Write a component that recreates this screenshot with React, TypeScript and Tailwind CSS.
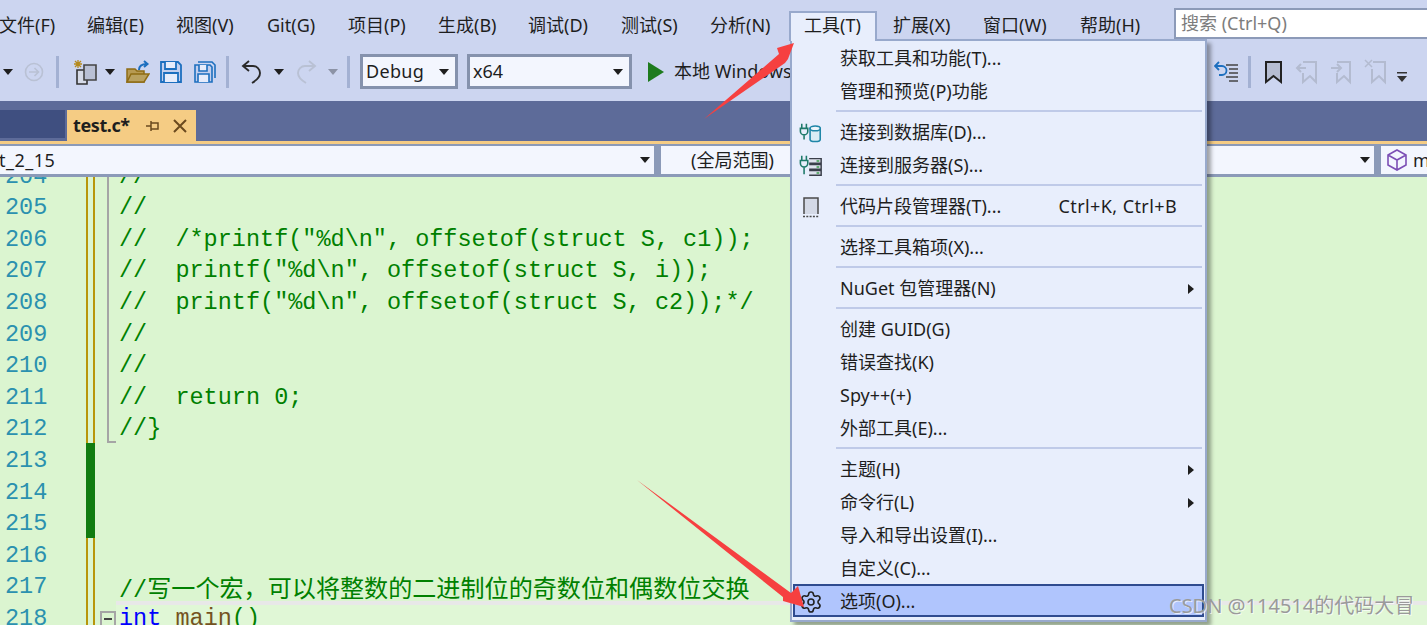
import React from 'react';
import { Settings } from 'lucide-react';

const menus = [
  { label: '文件(F)', cls: 'w-[87px] -ml-px' },
  { label: '编辑(E)', cls: 'w-[89px] ml-px' },
  { label: '视图(V)', cls: 'w-[91px]' },
  { label: 'Git(G)', cls: 'w-[81px]' },
  { label: '项目(P)', cls: 'w-[90px]' },
  { label: '生成(B)', cls: 'w-[90px]' },
  { label: '调试(D)', cls: 'w-[93px]' },
  { label: '测试(S)', cls: 'w-[89px]' },
  { label: '分析(N)', cls: 'w-[79px]' },
];
const menusAfter = [
  { label: '扩展(X)', cls: 'w-[106px] pl-[16px]' },
  { label: '窗口(W)', cls: 'w-[97px]' },
  { label: '帮助(H)', cls: 'w-[94px]' },
];

type Item = { label?: string; icon?: React.ReactNode; shortcut?: string; sub?: boolean; active?: boolean; sep?: boolean };

const DbIcon = () => (
  <svg width="24" height="24" viewBox="0 0 26 24" fill="none">
    <path d="M3 2v5M8 2v5M1.5 7h8v3a4 4 0 0 1-8 0zM5.500 14v5" stroke="#1f7a6a" strokeWidth="1.700" />
    <path d="M12 7v12c0 3 11 3 11 0V7z" fill="#d9ecf5" stroke="#1f86a8" strokeWidth="1.700" />
    <ellipse cx="17.500" cy="7" rx="5.500" ry="2.500" fill="#eef6fb" stroke="#1f86a8" strokeWidth="1.700" />
  </svg>
);

const ServerIcon = () => (
  <svg width="24" height="24" viewBox="0 0 26 24" fill="none">
    <path d="M3 1v5M8 1v5M1.500 6h8v3a4 4 0 0 1-8 0zM5.500 13v8" stroke="#1f7a6a" strokeWidth="1.700" />
    <path d="M11 4h13v5H11M11 10.500h13v5H11M11 17h13v5H11" fill="#dfe3ee" stroke="#3a3f4a" strokeWidth="1.600" />
    <path d="M19 6.500h3M19 13h3M19 19.500h3" stroke="#3b9c4b" strokeWidth="1.600" />
  </svg>
);

const SnippetIcon = () => (
  <svg width="18" height="22" viewBox="0 0 18 22" fill="none">
    <path d="M2 18V2h14v16" fill="#d4d9e6" stroke="#4a4a4a" strokeWidth="1.500" />
    <path d="M1 20.500h16" stroke="#4a4a4a" strokeWidth="1.500" strokeDasharray="2 1.300" />
  </svg>
);

const toolItems: Item[] = [
  { label: '获取工具和功能(T)...' },
  { label: '管理和预览(P)功能' },
  { sep: true },
  { label: '连接到数据库(D)...', icon: <DbIcon /> },
  { label: '连接到服务器(S)...', icon: <ServerIcon /> },
  { sep: true },
  { label: '代码片段管理器(T)...', icon: <SnippetIcon />, shortcut: 'Ctrl+K, Ctrl+B' },
  { sep: true },
  { label: '选择工具箱项(X)...' },
  { sep: true },
  { label: 'NuGet 包管理器(N)', sub: true },
  { sep: true },
  { label: '创建 GUID(G)' },
  { label: '错误查找(K)' },
  { label: 'Spy++(+)' },
  { label: '外部工具(E)...' },
  { sep: true },
  { label: '主题(H)', sub: true },
  { label: '命令行(L)', sub: true },
  { label: '导入和导出设置(I)...' },
  { label: '自定义(C)...' },
  { label: '选项(O)...', icon: <Settings size={24} strokeWidth={1.600} color="#222" />, active: true },
];

const Caret = ({ color = '#1e1e1e', size = 10 }: { color?: string; size?: number }) => (
  <svg width={size} height={size * 0.6} viewBox="0 0 10 6">
    <path d="M0 0h10L5 6z" fill={color} />
  </svg>
);

const Sep = ({ className }: { className: string }) => <div className={`w-[3px] h-[32px] bg-[#a3b1d3] shrink-0 ${className}`} />;

const Slot = ({ className, children }: { className: string; children: React.ReactNode }) => (
  <div className={`flex items-center justify-center shrink-0 ${className}`}>{children}</div>
);

const Bookmark = ({ fill, stroke }: { fill: string; stroke: string }) => (
  <path d="M5 3h15v20l-7.500-6L5 23z" fill={fill} stroke={stroke} strokeWidth="2" />
);

const Combo = ({ className, text, textClass = '', caret = true }: { className: string; text?: string; textClass?: string; caret?: boolean }) => (
  <div className={`flex items-center bg-[#f3f6fe] overflow-hidden ${className}`}>
    <span className={`flex-1 whitespace-nowrap ${textClass}`}>{text}</span>
    {caret && <Caret />}
  </div>
);

const Num = ({ n }: { n: number }) => (
  <div className="w-[86px] shrink-0 pl-[5px] pt-[2px] text-[#2b91af]">{n}</div>
);

const rows: { n: number; code?: React.ReactNode; fold?: 'line' | 'end' | 'box'; changed?: boolean; current?: boolean }[] = [
  { n: 204, code: '//', fold: 'line' },
  { n: 205, code: '//', fold: 'line' },
  { n: 206, code: '//  /*printf("%d\\n", offsetof(struct S, c1));', fold: 'line' },
  { n: 207, code: '//  printf("%d\\n", offsetof(struct S, i));', fold: 'line' },
  { n: 208, code: '//  printf("%d\\n", offsetof(struct S, c2));*/', fold: 'line' },
  { n: 209, code: '//', fold: 'line' },
  { n: 210, code: '//', fold: 'line' },
  { n: 211, code: '//  return 0;', fold: 'line' },
  { n: 212, code: '//}', fold: 'end' },
  { n: 213, changed: true },
  { n: 214, changed: true },
  { n: 215, changed: true },
  { n: 216 },
  { n: 217, code: <>//<span className="text-[24.100px] [font-family:'Noto_Sans_CJK_SC',sans-serif]">写一个宏，可以将整数的二进制位的奇数位和偶数位交换</span></> },
  {
    n: 218,
    fold: 'box',
    current: true,
    code: (
      <>
        <span className="text-[#0000ff]">int</span> <span className="text-[#74531f]">main</span>()
      </>
    ),
  },
];

const App: React.FC = () => {
  return (
    <div className="relative w-[1427px] h-[625px] overflow-hidden flex flex-col bg-[#ccd5f0] text-[18px] text-[#1e1e1e] [font-family:'Noto_Sans','Noto_Sans_CJK_SC',sans-serif]">
      {/* menu bar */}
      <div className="flex h-[44px] shrink-0 items-start">
        {menus.map(m => (
          <div key={m.label} className={`h-[50px] pt-[12px] leading-[26px] whitespace-nowrap shrink-0 ${m.cls}`}>{m.label}</div>
        ))}
        <div className="relative z-30 w-[88px] h-[30px] mt-[11px] shrink-0 bg-[#e8eefc] border-2 border-b-0 border-[#98a9cc] pl-[13px] leading-[24px] whitespace-nowrap">
          工具(T)
        </div>
        {menusAfter.map(m => (
          <div key={m.label} className={`h-[50px] pt-[12px] leading-[26px] whitespace-nowrap shrink-0 ${m.cls}`}>{m.label}</div>
        ))}
        <div className="mt-[8px] flex-1 h-[31px] bg-white border-2 border-r-0 border-[#8c9ab8] pl-[5px] leading-[26px] text-[#7d7d7d] whitespace-nowrap">
          搜索 (Ctrl+Q)
        </div>
      </div>

      {/* toolbar */}
      <div className="flex h-[57px] shrink-0 items-center pb-[2px]">
        <Slot className="w-[16px]"><Caret /></Slot>
        <Slot className="w-[28px] ml-[4px]">
          <svg width="20" height="20" viewBox="0 0 20 20" fill="none" stroke="#b9c1d4" strokeWidth="1.600">
            <circle cx="10" cy="10" r="8.500" />
            <path d="M5 10h9M10.500 6l4 4-4 4" />
          </svg>
        </Slot>
        <Sep className="ml-[8px]" />
        <Slot className="w-[32px] ml-[11px]">
          <svg width="26" height="26" viewBox="0 0 26 26" fill="none">
            <path d="M5 1v8M1 5h8M2 2l6 6M8 2L2 8" stroke="#b58a1e" strokeWidth="1.300" />
            <path d="M4 11h10v14H4z" fill="#d6dbe8" stroke="#333" strokeWidth="1.600" />
            <path d="M11 6h12v15H11z" fill="#b9c0d4" stroke="#444" strokeWidth="1.600" />
          </svg>
        </Slot>
        <Slot className="w-[16px]"><Caret /></Slot>
        <Slot className="w-[28px] ml-[6px]">
          <svg width="24" height="24" viewBox="0 0 24 24" fill="none">
            <path d="M1 22V9h8l2 2h7v11z" fill="#b79a52" stroke="#8f6c14" strokeWidth="1.500" />
            <path d="M1 22l4-8h18l-5 8z" fill="#b9a15f" stroke="#8f6c14" strokeWidth="1.500" />
            <path d="M13 10c0-4 3-6 8-6M18 1l3.500 3L18 7" stroke="#1c6fbf" strokeWidth="2" />
          </svg>
        </Slot>
        <Slot className="w-[28px] ml-[5px]">
          <svg width="22" height="22" viewBox="0 0 22 22" fill="none" stroke="#1c6fbf" strokeWidth="1.800">
            <path d="M1 1h17l3 3v17H1z" fill="#c3cfee" />
            <path d="M5 1v7h11V1M4 21v-9h14v9" fill="#e6ecfb" />
          </svg>
        </Slot>
        <Slot className="w-[28px] ml-[6px]">
          <svg width="22" height="22" viewBox="0 0 22 22" fill="none" stroke="#1c6fbf" strokeWidth="1.600">
            <path d="M4 1h14l3 3v13" />
            <path d="M1 4h15l2 2v15H1z" fill="#c3cfee" />
            <path d="M5 4v6h8V4M4 21v-8h11v8" fill="#e6ecfb" />
          </svg>
        </Slot>
        <Sep className="ml-[7px]" />
        <Slot className="w-[28px] ml-[9px]">
          <svg width="22" height="24" viewBox="0 0 22 24" fill="none" stroke="#2a2a2a" strokeWidth="1.900">
            <path d="M8 1L2 6l6 5" />
            <path d="M2 6h10a7 7 0 0 1 7 7c0 4-3 7-8 10" />
          </svg>
        </Slot>
        <Slot className="w-[16px] ml-[5px]"><Caret /></Slot>
        <Slot className="w-[28px] ml-[5px]">
          <svg width="22" height="24" viewBox="0 0 22 24" fill="none" stroke="#b9c1d4" strokeWidth="1.900">
            <path d="M14 1l6 5-6 5" />
            <path d="M20 6H10a7 7 0 0 0-7 7c0 4 3 7 8 10" />
          </svg>
        </Slot>
        <Slot className="w-[16px] ml-[5px]"><Caret color="#8c93a6" /></Slot>
        <Sep className="ml-[6px]" />
        <Combo className="w-[98px] h-[35px] ml-[10px] border-[3px] border-[#8592ad] pl-[3px] pr-[6px] tracking-[0.3px]" text="Debug" />
        <Combo className="w-[165px] h-[35px] ml-[9px] border-[3px] border-[#8592ad] pl-[3px] pr-[6px]" text="x64" />
        <Slot className="w-[16px] ml-[16px]">
          <svg width="16" height="20" viewBox="0 0 16 20"><path d="M0 0l16 10L0 20z" fill="#1e7b1e" /></svg>
        </Slot>
        <span className="ml-[10px] whitespace-nowrap">本地 Windows 调试器</span>
        <div className="ml-auto flex items-center pr-[15px]">
          <Slot className="w-[26px]">
            <svg width="25" height="22" viewBox="0 0 25 22" fill="none">
              <path d="M5 1L1 5l4 4M1 5h7a4 4 0 0 1 0 9H5" stroke="#1c6fbf" strokeWidth="1.800" />
              <path d="M12 4h12M15 8h9M15 12h9M12 16h12M15 20h9" stroke="#444" strokeWidth="1.400" />
            </svg>
          </Slot>
          <Sep className="ml-[9px]" />
          <Slot className="w-[34px] ml-[5px]">
            <svg width="25" height="26" viewBox="0 0 25 26"><Bookmark fill="#b6bdd2" stroke="#222" /></svg>
          </Slot>
          <Slot className="w-[34px]">
            <svg width="25" height="26" viewBox="0 0 25 26" fill="none" stroke="#b3bbd0" strokeWidth="2">
              <path d="M8 3h13v20l-6-6-7 6v-9" />
              <path d="M11 9H2M6 5L2 9l4 4" />
            </svg>
          </Slot>
          <Slot className="w-[34px]">
            <svg width="25" height="26" viewBox="0 0 25 26" fill="none" stroke="#b3bbd0" strokeWidth="2">
              <path d="M8 3h13v20l-6-6-7 6v-9" />
              <path d="M2 9h10M8 5l4 4-4 4" />
            </svg>
          </Slot>
          <Slot className="w-[34px]">
            <svg width="25" height="26" viewBox="0 0 25 26" fill="none" stroke="#b3bbd0" strokeWidth="2">
              <path d="M10 3h12v20l-6-6-7 6V10" />
              <path d="M2 1l7 7M9 1L2 8" strokeWidth="1.500" />
            </svg>
          </Slot>
          <Slot className="w-[20px] pt-[10px]">
            <svg width="10" height="12" viewBox="0 0 10 12">
              <path d="M0 1h10v1.500H0z" fill="#333" />
              <path d="M0 5h10L5 11z" fill="#333" />
            </svg>
          </Slot>
        </div>
      </div>

      {/* tab strip */}
      <div className="flex h-[40px] shrink-0 items-end bg-[#5d6b99]">
        <div className="w-[65px] h-[28px] mb-[3px] bg-[#3f4f80]" />
        <div className="ml-[2px] w-[129px] h-[31px] bg-[#f5cc84] flex items-center pl-[6px] font-bold text-[#1e1e1e]">
          <span className="tracking-[-0.4px]">test.c*</span>
          <svg className="ml-[16px]" width="14" height="12" viewBox="0 0 14 12" fill="none" stroke="#6b4a1e" strokeWidth="1.500">
            <path d="M0 6h5M5 1v10M5 3h7v6H5" />
          </svg>
          <svg className="ml-[13px]" width="14" height="14" viewBox="0 0 14 14" fill="none" stroke="#6b4a1e" strokeWidth="2">
            <path d="M1 1l12 12M13 1L1 13" />
          </svg>
        </div>
      </div>
      <div className="h-[3px] shrink-0 bg-[#f5cc84]" />

      {/* navigation bar */}
      <div className="flex h-[33px] shrink-0 gap-[7px] bg-[#8b9ab8] py-[2px] border-b border-[#8b9ab8]">
        <Combo className="w-[654px] pr-[4px]" text="t_2_15" textClass="-ml-[1px] tracking-[0.5px]" />
        <Combo className="w-[353px] pl-[30px]" text="(全局范围)" caret={false} />
        <Combo className="w-[353px] pr-[4px]" />
        <div className="flex-1 flex items-center bg-[#f3f6fe] pl-[5px] overflow-hidden">
          <svg width="22" height="24" viewBox="0 0 22 24" fill="none" stroke="#7c4fb5" strokeWidth="1.600" className="shrink-0">
            <path d="M11 2l9 5v10l-9 5-9-5V7zM2 7l9 5 9-5M11 12v10" />
          </svg>
          <span className="ml-[5px] whitespace-nowrap">main()</span>
        </div>
      </div>

      {/* editor */}
      <div className="flex-1 overflow-hidden bg-[#dbf5d0] text-[23.500px] leading-[31.600px] [font-family:'Liberation_Mono','Noto_Sans_CJK_SC',monospace]">
        <div className="-mt-[18.400px]">
          {rows.map(r => (
            <div key={r.n} className="flex h-[31.600px]">
              <Num n={r.n} />
              <div className={`w-[9px] shrink-0 ${r.changed ? 'bg-[#107c10]' : 'border-x-2 border-[#b8960a]'}`} />
              <div className="w-[21px] shrink-0 flex items-center">
                {r.fold === 'line' && <div className="ml-[12px] h-full w-[2px] bg-[#a5a5a5]" />}
                {r.fold === 'end' && <div className="ml-[12px] h-full w-[9px] border-l-2 border-b-2 border-[#a5a5a5]" />}
                {r.fold === 'box' && (
                  <div className="ml-[5px] mt-[4px] w-[16px] h-[16px] shrink-0 border-2 border-[#a5a5a5] flex items-center justify-center">
                    <div className="w-[8px] h-[2px] bg-[#444]" />
                  </div>
                )}
              </div>
              <div className={`flex-1 pl-[3px] pt-[2px] whitespace-pre text-[#008000] ${r.current ? 'bg-[#e0f7d6] shadow-[inset_0_4px_0_#e8e8e8]' : ''}`}>{r.code}</div>
            </div>
          ))}
        </div>
      </div>

      {/* tools dropdown */}
      <div className="absolute z-20 left-[790px] top-[39px] w-[417px] h-[583px] bg-[#e8eefc] border-2 border-[#98a9cc] shadow-[4px_4px_4px_rgba(0,0,0,0.35)]">
        {toolItems.map((item, i) =>
          item.sep ? (
            <div key={i} className="h-[2px] my-[3px] ml-[44px] mr-[3px] bg-[#bfcae8]" />
          ) : (
            <div
              key={i}
              className={`mx-px h-[33px] pt-[2px] flex items-center whitespace-nowrap ${item.active ? 'bg-[#b0c5fd] shadow-[inset_0_0_0_2px_#2f4b8f]' : ''}`}
            >
              <div className="w-[47px] shrink-0">
                <div className="w-[36px] flex justify-center">{item.icon}</div>
              </div>
              <span className="flex-1">{item.label}</span>
              {item.shortcut && <span className="tracking-[0.4px]">{item.shortcut}</span>}
              <div className="w-[27px] shrink-0 flex justify-center">
                {item.sub && (
                  <svg width="6" height="10" viewBox="0 0 6 10"><path d="M0 0l6 5-6 5z" fill="#1e1e1e" /></svg>
                )}
              </div>
            </div>
          ),
        )}
      </div>

      {/* red annotation arrows */}
      <svg className="absolute z-40 left-0 top-0 pointer-events-none" width="1427" height="625" viewBox="0 0 1427 625">
        <path d="M704 119L779 54 777 48 794 43 788 59 785 63z" fill="#f64040" />
        <path d="M637 480L791 593 798 586 804 607 783 601 783 597z" fill="#f64040" />
      </svg>

      <div className="absolute z-50 left-[1169px] top-[593px] text-[20px] leading-[26px] whitespace-nowrap text-[#9a9a9a] [text-shadow:1px_1px_0_rgba(255,255,255,0.7)]">
        CSDN @114514的代码大冒
      </div>
    </div>
  );
};

export default App;
